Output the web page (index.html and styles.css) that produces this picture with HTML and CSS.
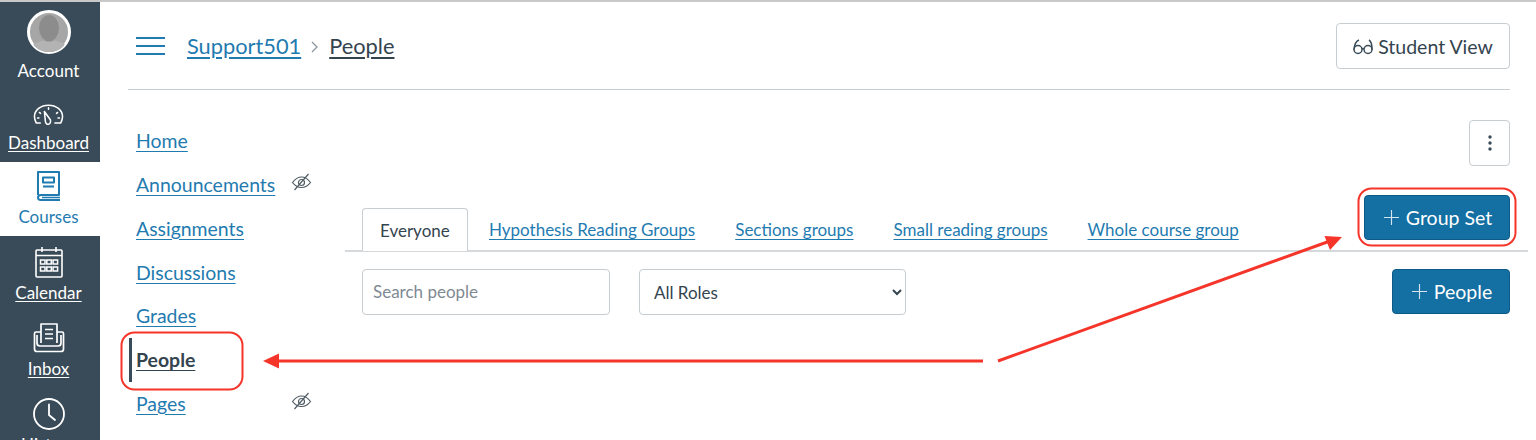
FILE: index.html
```html
<!DOCTYPE html>
<html lang="en">
<head>
<meta charset="utf-8">
<title>People: Support501</title>
<link rel="stylesheet" href="styles.css">
</head>
<body>
<div class="app">
  <nav class="global">
    <a class="gitem account">
      <span class="avatar">
        <svg viewBox="0 0 44 44" width="44" height="44"><defs><clipPath id="c"><circle cx="22" cy="22" r="20"/></clipPath></defs><circle cx="22" cy="22" r="20.5" fill="#a6a6a6" stroke="#fff" stroke-width="3"/><g clip-path="url(#c)"><ellipse cx="22" cy="18" rx="10" ry="13" fill="#8c8c8c"/><path d="M3 44c0-9 10-12 14-14h10c4 2 14 5 14 14z" fill="#8c8c8c"/><path d="M2 37c5-4 11-6 15-7 3 2 7 2 10 0 4 1 10 3 15 7v7H2z" fill="#b3b3b3"/></g></svg>
      </span>
      <span class="glabel plain">Account</span>
    </a>
    <a class="gitem">
      <svg class="gicon" viewBox="0 -8.500 34 35" width="31" height="32" fill="none" stroke="#fff" stroke-width="1.700" stroke-linecap="round" stroke-linejoin="round"><path d="M8 21H3.500C2.400 18.600 1.600 16.500 1.600 14.300 1.600 6.800 8.500 1.500 17 1.500s15.400 5.300 15.400 12.800c0 2.200-.8 4.300-1.900 6.700H24"/><path d="M12.500 8.500l6.500 9c.8 2.500-.2 4.600-2 5-2 .2-3.400-1.500-3.500-4z"/><path d="M17 4.500v1.500M7 9.500l1.200 1M27 9.500l-1.200 1M5 15.500h1.500M27.500 15.500H29"/></svg>
      <span class="glabel">Dashboard</span>
    </a>
    <a class="gitem active">
      <svg class="gicon" viewBox="0 0 26 32" width="26" height="32" fill="none" stroke="#1f7bb0" stroke-width="2" stroke-linejoin="round"><path d="M2 25V2h21v23H5c-4 0-4 5 0 5h19"/><path d="M7 7.500h11v5H7zM7 16.500h11"/><path d="M6 27.500h18" stroke-width="1.500"/></svg>
      <span class="glabel">Courses</span>
    </a>
    <a class="gitem">
      <svg class="gicon" viewBox="0 0 30 32" width="30" height="32" fill="none" stroke="#fff" stroke-width="1.600"><rect x="2" y="4" width="26" height="27" rx="1"/><path d="M2 9.500h26M8 1v5M22 1v5"/><path d="M6.500 14h4.500v4H6.500zM12.800 14h4.500v4h-4.500zM19.100 14h4.500v4h-4.500zM6.500 21h4.500v4H6.500zM12.800 21h4.500v4h-4.500zM19.100 21h4.500v4h-4.500z" stroke-width="1.500"/></svg>
      <span class="glabel">Calendar</span>
    </a>
    <a class="gitem">
      <svg class="gicon" viewBox="0 0 32 30" width="32" height="30" fill="none" stroke="#fff" stroke-width="1.700" stroke-linejoin="round"><path d="M8 20V1h16v19"/><path d="M12 6.500h8M12 11h8M12 15.500h8"/><path d="M8 9H3c-1 0-1.500.8-1.500 1.500V26c0 1.500 1 2.500 2.500 2.500h24c1.500 0 2.500-1 2.500-2.500V10.500C30.500 9.800 30 9 29 9h-5"/><path d="M4 12v8c0 2 1 3 3 3h18c2 0 3-1 3-3v-8"/></svg>
      <span class="glabel">Inbox</span>
    </a>
    <a class="gitem">
      <svg class="gicon" viewBox="0 0 32 32" width="32" height="32" fill="none" stroke="#fff" stroke-width="1.800" stroke-linecap="round"><circle cx="16" cy="16" r="15"/><path d="M16 6.500V17l6 5"/></svg>
      <span class="glabel">History</span>
    </a>
  </nav>
  <main class="page">
    <header class="topbar">
      <svg class="burger" viewBox="0 0 30 20" width="30" height="20" fill="none" stroke="#1f7bb0" stroke-width="2"><path d="M0 2h29M0 10h29M0 18h29"/></svg>
      <a class="crumb link">Support501</a>
      <svg class="chev" viewBox="0 0 8 12" width="8" height="12" fill="none" stroke="#8b969e" stroke-width="1.300"><path d="M1 1l5 5-5 5"/></svg>
      <a class="crumb current">People</a>
      <a class="btn student">
        <svg viewBox="0 0 20 16" width="20" height="16" fill="none" stroke="#394b58" stroke-width="1.500"><circle cx="5" cy="10.500" r="4"/><circle cx="15" cy="10.500" r="4"/><path d="M9 10c.7-.6 1.300-.6 2 0M1 10.500C1.500 6 3 2 6 1M19 10.500c0-4-.5-8-3-9.500"/></svg>
        Student View
      </a>
    </header>
    <div class="body">
      <ul class="coursenav">
        <li><a>Home</a></li>
        <li><a>Announcements</a><svg class="eye" viewBox="0 0 20 18" width="20" height="18" fill="none" stroke="#4f5b63" stroke-width="1.200"><path d="M1 9.500C4 5.500 7 4 10 4s6 1.500 9 5.500c-3 4-6 5-9 5s-6-1-9-5z"/><circle cx="10" cy="9.500" r="3"/><path d="M3 17L17 1"/></svg></li>
        <li><a>Assignments</a></li>
        <li><a>Discussions</a></li>
        <li><a>Grades</a></li>
        <li class="on"><a>People</a></li>
        <li><a>Pages</a><svg class="eye" viewBox="0 0 20 18" width="20" height="18" fill="none" stroke="#4f5b63" stroke-width="1.200"><path d="M1 9.500C4 5.500 7 4 10 4s6 1.500 9 5.500c-3 4-6 5-9 5s-6-1-9-5z"/><circle cx="10" cy="9.500" r="3"/><path d="M3 17L17 1"/></svg></li>
      </ul>
      <section class="content">
        <div class="kebabrow">
          <a class="btn kebab"><svg viewBox="0 0 4 16" width="4" height="16" fill="#394b58"><circle cx="2" cy="2" r="1.700"/><circle cx="2" cy="8" r="1.700"/><circle cx="2" cy="14" r="1.700"/></svg></a>
        </div>
        <div class="tabbar">
          <div class="tabs">
            <span class="tab sel">Everyone</span>
            <a class="tab">Hypothesis Reading Groups</a>
            <a class="tab">Sections groups</a>
            <a class="tab">Small reading groups</a>
            <a class="tab">Whole course group</a>
          </div>
          <a class="btn primary groupset"><svg class="plus" viewBox="0 0 16 16" width="15" height="15" fill="none" stroke="#d5e4ee" stroke-width="1.200"><path d="M8 0v16M0 8h16"/></svg>Group Set</a>
        </div>
        <div class="filters">
          <input class="search" type="text" placeholder="Search people">
          <select class="roles"><option>All Roles</option></select>
          <a class="btn primary addpeople"><svg class="plus" viewBox="0 0 16 16" width="15" height="15" fill="none" stroke="#d5e4ee" stroke-width="1.200"><path d="M8 0v16M0 8h16"/></svg>People</a>
        </div>
      </section>
    </div>
  </main>
</div>
<svg class="notes" viewBox="0 0 1536 440" width="1536" height="440" fill="none">
  <rect x="121.500" y="332.500" width="121" height="57" rx="13" stroke="#f5352a" stroke-width="2"/>
  <rect x="1358.500" y="188.500" width="157" height="57" rx="13" stroke="#f5352a" stroke-width="2"/>
  <path d="M983 361H276" stroke="#f5352a" stroke-width="3"/>
  <path d="M263 361l16-7.500v15z" fill="#f5352a"/>
  <path d="M998 361l332-120" stroke="#f5352a" stroke-width="3"/>
  <path d="M1342 237l-17.500-1 5.500 14z" fill="#f5352a"/>
</svg>
</body>
</html>
```
FILE: styles.css
```css
* { box-sizing: border-box; }
html, body { margin: 0; height: 440px; overflow: hidden; background: #fff; }
body { font-family: Lato, "Open Sans", sans-serif; color: #34444f; position: relative; }
a { text-decoration: none; }

.app { display: flex; height: 440px; border-top: 2px solid #c9c9c9; }

.global { width: 100px; flex: none; background: #394b58; display: flex; flex-direction: column; height: 438px; overflow: hidden; }
.gitem { display: flex; flex-direction: column; align-items: center; height: 76px; flex: none; color: #fff; padding: 10px 3px 0 0; }
.gitem.account { height: 84px; padding-top: 8px; }
.avatar { display: block; width: 44px; height: 44px; }
.avatar svg { display: block; }
.gicon { display: block; flex: none; height: 32px; }
.glabel { font-size: 17px; line-height: 22px; margin-top: 4px; text-decoration: underline; text-underline-offset: 2px; }
.glabel.plain { text-decoration: none; margin-top: 6px; }
.gitem.active { background: #fff; color: #1f7bb0; height: 74px; padding-top: 8px; }
.gitem.active .glabel { text-decoration: none; margin-top: 4px; }

.page { flex: 1; min-width: 0; padding-left: 28px; }

.topbar { display: flex; align-items: center; width: 1382px; height: 88px; border-bottom: 1px solid #c7cdd1; padding: 0 0 0 8px; }
.burger { margin-right: 21px; }
.crumb { font-size: 21.800px; text-decoration: underline; text-underline-offset: 3px; }
.crumb.link { color: #1f7bb0; }
.crumb.current { color: #34444f; }
.chev { margin: 2px 10px 0 10px; }

.btn { display: inline-flex; align-items: center; justify-content: center; border: 1px solid #c7cdd1; border-radius: 4px; background: #fff; color: #34444f; font-size: 19.500px; }
.student { margin-left: auto; width: 174px; height: 46px; gap: 5px; padding-top: 2px; }

.body { display: flex; }
.coursenav { list-style: none; margin: 0; padding: 29px 0 0 0; width: 234px; flex: none; }
.coursenav li { height: 43.750px; display: flex; align-items: center; position: relative; padding-left: 8px; font-size: 19.450px; }
.coursenav a { color: #1f7bb0; text-decoration: underline; text-underline-offset: 3px; }
.coursenav .eye { position: absolute; left: 163px; top: 10px; width: 21px; }
.coursenav .on a { color: #34444f; font-weight: 700; }
.coursenav .on::before { content: ""; position: absolute; left: 1px; top: 0; width: 3px; height: 44px; background: #394b58; }

.content { width: 1166px; padding-top: 30px; }
.kebabrow { display: flex; justify-content: flex-end; padding-right: 18px; height: 45px; }
.kebab { width: 41px; height: 46px; }

.tabbar { display: flex; justify-content: space-between; align-items: flex-end; border-bottom: 2px solid #d5d9dc; margin: -1px 0 0 -17px; width: 1183px; height: 88px; padding: 0 18px 0 17px; }
.tabs { display: flex; height: 43px; margin-bottom: -1px; }
.tab { font-size: 17px; color: #1f7bb0; text-decoration: underline; text-underline-offset: 3px; padding: 0 20px; display: flex; align-items: center; height: 43px; }
.tab.sel { color: #34444f; text-decoration: none; border: 1px solid #c7cdd1; border-bottom: 0; border-radius: 4px 4px 0 0; background: #fff; padding: 0 17px; width: 106px; margin-right: 1px; }
.primary { background: #146fa3; border-color: #0e5a86; color: #fff; height: 45px; padding-left: 2px; }
.groupset { width: 146px; margin-bottom: 10px; }
.addpeople { width: 118px; margin-left: auto; margin-right: 18px; }
.plus { margin-right: 7px; }

.filters { display: flex; align-items: flex-start; padding-top: 17px; }
.search { width: 248px; height: 46px; border: 1px solid #c7cdd1; border-radius: 4px; padding: 0 10px 2px; font: 17px Lato, sans-serif; color: #34444f; }
.search::placeholder { color: #7f8a92; opacity: 1; }
.roles { width: 267px; height: 46px; margin-left: 29px; border: 1px solid #c7cdd1; border-radius: 4px; background: #fff; padding: 0 10px; font: 17px Lato, sans-serif; color: #34444f; }

.notes { position: absolute; left: 0; top: 0; pointer-events: none; }
```
